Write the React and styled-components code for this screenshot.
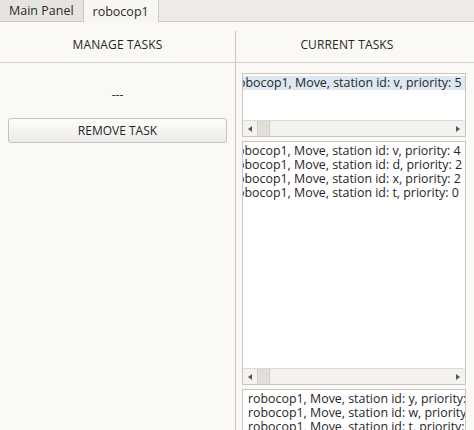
import React from 'react';
import styled, { createGlobalStyle } from 'styled-components';

const GlobalStyle = createGlobalStyle`
    html, body {
        margin: 0;
        padding: 0;
        background: #fbf9f6;
    }
    body {
        font-family: "Open Sans", "Noto Sans", "DejaVu Sans", sans-serif;
        color: #2b2b2b;
    }
`;

const Window = styled.div`
    width: 474px;
    height: 430px;
    overflow: hidden;
    display: flex;
    flex-direction: column;
    background: #fbf9f6;
`;

const TabBar = styled.div`
    display: flex;
    height: 22px;
    flex: none;
    background: #eeebe7;
    border-bottom: 1px solid #cdc8c2;
    box-sizing: border-box;
`;

const Tab = styled.div`
    display: flex;
    align-items: center;
    padding: 0 ${p => p.$pad}px;
    font-size: 12.5px;
    color: #2b2b2b;
    background: ${p => (p.$active ? '#f8f6f3' : '#e7e4e0')};
    border-right: 1px solid #cdc8c2;
    margin-bottom: ${p => (p.$active ? '-1px' : '0')};
    box-sizing: border-box;
`;

const Body = styled.div`
    flex: 1;
    display: grid;
    grid-template-columns: 236px minmax(0, 1fr);
    padding-top: 9px;
    min-height: 0;
`;

const Column = styled.section`
    display: flex;
    flex-direction: column;
    min-height: 0;
    min-width: 0;
    border-right: ${p => (p.$divider ? '1px solid #c8c4bf' : 'none')};
`;

const Header = styled.div`
    height: 32px;
    flex: none;
    display: flex;
    align-items: center;
    justify-content: center;
    font-size: 12px;
    letter-spacing: 0.15px;
    color: #262626;
    border-bottom: 1px solid #d3cfca;
    box-sizing: border-box;
    padding: 0 ${p => p.$shift || 0}px 4px 0;
`;

const ManageBody = styled.div`
    display: flex;
    flex-direction: column;
    align-items: stretch;
    padding: 22px 8px 0 8px;
`;

const Dash = styled.div`
    text-align: center;
    font-size: 12px;
    height: 20px;
    line-height: 20px;
    margin-bottom: 13px;
`;

const Button = styled.button`
    height: 25px;
    border: 1px solid #c6c2bc;
    border-radius: 3px;
    background: linear-gradient(#fdfdfc, #ecebe9);
    font-family: inherit;
    font-size: 12px;
    color: #262626;
    padding: 0;
`;

const TaskBody = styled.div`
    display: flex;
    flex-direction: column;
    gap: ${p => p.$gap}px;
    padding: 10px 8px 0 6px;
    min-height: 0;
    min-width: 0;
`;

const List = styled.div`
    height: ${p => p.$h}px;
    flex: none;
    display: flex;
    flex-direction: column;
    background: #ffffff;
    border: 1px solid #c9c5bf;
    box-sizing: border-box;
    overflow: hidden;
    min-width: 0;
`;

const Items = styled.div`
    flex: 1;
    padding-top: 2px;
    overflow: hidden;
`;

const Item = styled.div`
    height: 14px;
    line-height: 14px;
    font-size: 12.4px;
    white-space: nowrap;
    padding-left: 5px;
    color: #262626;
    background: ${p => (p.$selected ? '#dde8f3' : 'transparent')};
    margin-left: ${p => -p.$scroll}px;
`;

const HScroll = styled.div`
    height: 16px;
    flex: none;
    display: flex;
    align-items: center;
    border-top: 1px solid #dedad5;
    background: #f4f2ef;
    box-sizing: border-box;
`;

const Arrow = styled.div`
    width: 14px;
    display: flex;
    justify-content: center;
    align-items: center;
`;

const Track = styled.div`
    flex: 1;
    height: 100%;
    display: flex;
    align-items: stretch;
`;

const Thumb = styled.div`
    width: 11px;
    background: #e2dfdb;
    border-left: 1px solid #d2cec8;
    border-right: 1px solid #d2cec8;
`;

const Triangle = ({ dir }) => (
    <svg width="4" height="6" viewBox="0 0 4 6">
        {dir === 'left'
            ? <polygon points="4,0 0,3 4,6" fill="#555" />
            : <polygon points="0,0 4,3 0,6" fill="#555" />}
    </svg>
);

const ScrollBar = () => (
    <HScroll>
        <Arrow><Triangle dir="left" /></Arrow>
        <Track><Thumb /></Track>
        <Arrow><Triangle dir="right" /></Arrow>
    </HScroll>
);

const first = [{ id: 'v', pr: 5 }];
const second = [
    { id: 'v', pr: 4 },
    { id: 'd', pr: 2 },
    { id: 'x', pr: 2 },
    { id: 't', pr: 0 },
];
const third = [
    { id: 'y', pr: 3 },
    { id: 'w', pr: 1 },
    { id: 't', pr: 0 },
];

const label = t => `robocop1, Move, station id: ${t.id}, priority: ${t.pr}`;

const App = () => {
    return (
        <Window>
            <GlobalStyle />
            <TabBar>
                <Tab $pad={9}>Main Panel</Tab>
                <Tab $pad={9} $active>robocop1</Tab>
            </TabBar>
            <Body>
                <Column $divider>
                    <Header>MANAGE TASKS</Header>
                    <ManageBody>
                        <Dash>---</Dash>
                        <Button>REMOVE TASK</Button>
                    </ManageBody>
                </Column>
                <Column>
                    <Header $shift={16}>CURRENT TASKS</Header>
                    <TaskBody $gap={4}>
                        <List $h={64}>
                            <Items>
                                {first.map((t, i) => (
                                    <Item key={i} $scroll={15} $selected>{label(t)}</Item>
                                ))}
                            </Items>
                            <ScrollBar />
                        </List>
                        <List $h={244}>
                            <Items>
                                {second.map((t, i) => (
                                    <Item key={i} $scroll={16}>{label(t)}</Item>
                                ))}
                            </Items>
                            <ScrollBar />
                        </List>
                        <List $h={60}>
                            <Items>
                                {third.map((t, i) => (
                                    <Item key={i} $scroll={0}>{label(t)}</Item>
                                ))}
                            </Items>
                        </List>
                    </TaskBody>
                </Column>
            </Body>
        </Window>
    );
};

export default App;
